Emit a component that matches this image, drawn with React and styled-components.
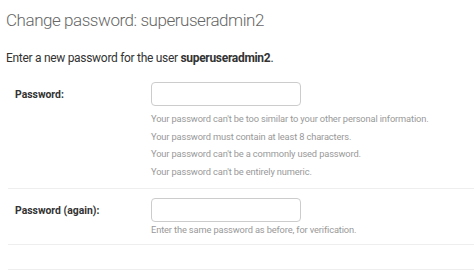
import React from 'react';
import styled, {createGlobalStyle} from 'styled-components';

const Global = createGlobalStyle`
  body {
    margin: 0;
    background: #fff;
    font-family: Roboto, "Liberation Sans", sans-serif;
    color: #333;
  }
`;

const Page = styled.div`
  padding: 8px 0 0 6px;
`;

const Title = styled.h1`
  margin: 0;
  font-size: 17px;
  line-height: 24px;
  font-weight: 300;
  letter-spacing: -0.45px;
  color: #666;
`;

const Intro = styled.p`
  margin: 18px 0 7px;
  font-size: 12px;
  line-height: 16px;
  letter-spacing: -0.3px;
  color: #333;
`;

const Fieldset = styled.div`
  margin-left: 2px;
`;

const Row = styled.div`
  display: flex;
  padding: ${p => p.$empty ? '0' : '9px 0 8px 7px'};
  height: ${p => p.$empty ? '24px' : 'auto'};
  border-bottom: 1px solid #eee;
`;

const Label = styled.label`
  width: 136px;
  flex-shrink: 0;
  font-size: 10.4px;
  font-weight: 700;
  color: #333;
  line-height: 26px;
`;

const Field = styled.div`
  display: flex;
  flex-direction: column;
`;

const Input = styled.input`
  box-sizing: border-box;
  width: 150px;
  height: 24px;
  margin: 0;
  border: 1px solid #ccc;
  border-radius: 4px;
  background: #fff;
  padding: 2px 6px;
`;

const HelpList = styled.ul`
  list-style: none;
  margin: 4px 0 0;
  padding: 0;
`;

const HelpItem = styled.li`
  font-size: 9.3px;
  line-height: 17.6px;
  letter-spacing: -0.14px;
  color: #999;
  white-space: nowrap;
`;

const Help = styled.div`
  margin-top: 1px;
  font-size: 9.3px;
  line-height: 13px;
  letter-spacing: -0.14px;
  color: #999;
  white-space: nowrap;
`;

const rules = [
  "Your password can't be too similar to your other personal information.",
  "Your password must contain at least 8 characters.",
  "Your password can't be a commonly used password.",
  "Your password can't be entirely numeric.",
];

export default function App() {
  return (
    <Page>
      <Global />
      <Title>Change password: superuseradmin2</Title>
      <Intro>Enter a new password for the user <strong>superuseradmin2</strong>.</Intro>
      <Fieldset>
        <Row>
          <Label htmlFor="id_password1">Password:</Label>
          <Field>
            <Input id="id_password1" type="password" />
            <HelpList>
              {rules.map((r, i) => <HelpItem key={i}>{r}</HelpItem>)}
            </HelpList>
          </Field>
        </Row>
        <Row>
          <Label htmlFor="id_password2">Password (again):</Label>
          <Field>
            <Input id="id_password2" type="password" />
            <Help>Enter the same password as before, for verification.</Help>
          </Field>
        </Row>
        <Row $empty />
      </Fieldset>
    </Page>
  );
}
